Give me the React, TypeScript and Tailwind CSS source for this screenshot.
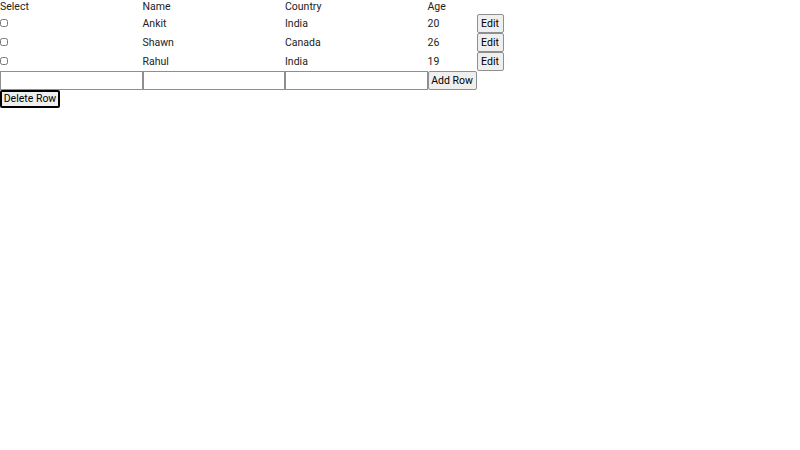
const rows = [
  { name: 'Ankit', country: 'India', age: 20 },
  { name: 'Shawn', country: 'Canada', age: 26 },
  { name: 'Rahul', country: 'India', age: 19 },
]

const btn =
  'bg-[#efefef] border border-[#8f8f8f] rounded-[2px] text-[10.5px] leading-[17px] text-black whitespace-nowrap'

export default function App() {
  return (
    <div className="font-['Roboto',sans-serif] text-[10.5px] leading-[14px] text-[#222] bg-white min-h-[450px]">
      <table className="border-collapse">
        <thead>
          <tr className="h-[14px] align-top">
            <th className="font-normal text-left p-0 w-[142.5px]">Select</th>
            <th className="font-normal text-left p-0 w-[142.5px]">Name</th>
            <th className="font-normal text-left p-0 w-[142.5px]">Country</th>
            <th className="font-normal text-left p-0 w-[49px]">Age</th>
            <th className="p-0 w-[27px]"></th>
          </tr>
        </thead>
        <tbody>
          {rows.map((r) => (
            <tr key={r.name} className="h-[19px]">
              <td className="p-0 align-middle">
                <input type="checkbox" className="m-0 w-[8px] h-[8px] block -mt-[2px]" />
              </td>
              <td className="p-0">{r.name}</td>
              <td className="p-0">{r.country}</td>
              <td className="p-0">{r.age}</td>
              <td className="p-0">
                <button className={btn + ' block w-[27px] h-[19px] px-0'}>Edit</button>
              </td>
            </tr>
          ))}
          <tr>
            <td className="p-0">
              <input className="block w-[142.5px] h-[19px] border border-[#8f8f8f] bg-white" />
            </td>
            <td className="p-0">
              <input className="block w-[142.5px] h-[19px] border border-[#8f8f8f] bg-white" />
            </td>
            <td className="p-0">
              <input className="block w-[142.5px] h-[19px] border border-[#8f8f8f] bg-white" />
            </td>
            <td className="p-0">
              <button className={btn + ' block h-[19px] w-[49px] px-0'}>Add Row</button>
            </td>
            <td className="p-0"></td>
          </tr>
        </tbody>
      </table>
      <button className="block bg-[#efefef] border-2 border-black rounded-[2px] px-0 text-[10.5px] leading-[14px] h-[18px] w-[60px] text-black whitespace-nowrap">
        Delete Row
      </button>
    </div>
  )
}
